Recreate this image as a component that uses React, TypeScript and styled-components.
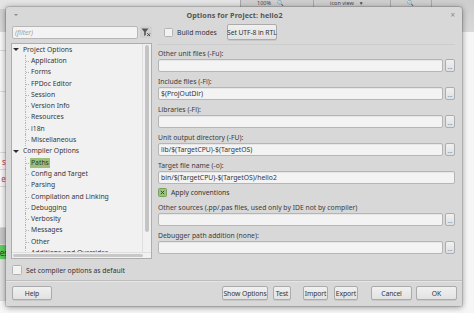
import React from 'react';
import styled, { createGlobalStyle } from 'styled-components';

const Global = createGlobalStyle`
  html, body { margin: 0; padding: 0; }
  body {
    width: 474px; height: 313px; overflow: hidden;
    font-family: "Noto Sans", "DejaVu Sans", sans-serif;
    background: #f5f5f5;
  }
`;

const Desktop = styled.div`
  position: relative;
  width: 474px;
  height: 313px;
  overflow: hidden;
  display: flex;
  flex-direction: column;
  background: #f6f6f6;
`;

const TopBar = styled.div`
  height: 32px;
  flex: none;
  display: flex;
  align-items: flex-start;
  background: linear-gradient(#cdcdcd, #d9d9d9);
  font-size: 5.5px;
  color: #444;
`;

const TopLight = styled.div`
  width: 240px;
  height: 9px;
  background: #e4e4e4;
  border-right: 1px solid #a8a8a8;
`;

const ToolItem = styled.div<{ $w: number }>`
  width: ${p => p.$w}px;
  height: 7px;
  display: flex;
  align-items: flex-start;
  gap: 6px;
  padding-left: 16px;
  border-right: 1px solid #a8a8a8;
  line-height: 6px;
  span { white-space: nowrap; }
`;

const BackRow = styled.div`
  flex: 1;
  display: flex;
`;

const LeftPane = styled.div`
  width: 8px;
  display: flex;
  flex-direction: column;
  font-size: 8px;
  background: #f7f7f7;
`;

const LeftLine = styled.div<{ $h: number; $bg?: string; $color?: string }>`
  height: ${p => p.$h}px;
  flex: none;
  background: ${p => p.$bg || 'transparent'};
  color: ${p => p.$color || '#444'};
  border-bottom: 1px solid #dadada;
  display: flex;
  align-items: center;
  justify-content: flex-end;
  overflow: hidden;
`;

const Dialog = styled.div`
  position: absolute;
  left: 6px;
  top: 7px;
  width: 456px;
  height: 299px;
  background: #d8d8d8;
  border-radius: 3px 3px 1px 1px;
  box-shadow: 0 1px 6px rgba(0, 0, 0, 0.45), 0 0 0 1px rgba(0,0,0,0.12);
  display: flex;
  flex-direction: column;
  color: #333;
  font-size: 6.8px;
`;

const TitleBar = styled.div`
  height: 15px;
  flex: none;
  display: grid;
  grid-template-columns: 1fr auto 1fr;
  align-items: center;
  padding: 0 7px 0 8px;
  color: #555;
`;

const Title = styled.div`
  font-weight: bold;
  font-size: 7.2px;
  letter-spacing: 0.1px;
`;

const MenuArrow = styled.div`
  width: 0; height: 0;
  border-left: 2.5px solid transparent;
  border-right: 2.5px solid transparent;
  border-top: 2.5px solid #888;
`;

const Close = styled.div`
  justify-self: end;
  font-size: 8px;
  color: #8a8a8a;
  line-height: 8px;
`;

const Main = styled.div`
  display: grid;
  grid-template-columns: 141px 298px;
  column-gap: 5px;
  padding: 2px 0 0 5px;
  flex: none;
`;

const LeftCol = styled.div`
  display: flex;
  flex-direction: column;
`;

const FilterRow = styled.div`
  margin-top: 2px;
  height: 13px;
  display: flex;
  gap: 2px;
  padding-left: 1px;
`;

const FilterInput = styled.div`
  width: 124px;
  height: 11px;
  background: #f3f3f3;
  border: 1px solid #b7b7b7;
  border-radius: 2px;
  font-style: italic;
  color: #a0a0a0;
  line-height: 11px;
  padding-left: 2px;
`;

const FilterBtn = styled.div`
  width: 12px;
  height: 12px;
  display: flex;
  align-items: center;
  justify-content: center;
  border-radius: 2px;
  background: #d0d0d0;
`;

const Tree = styled.div`
  margin-top: 4px;
  height: 214px;
  border: 1px solid #adadad;
  background: #f1f1f1;
  display: flex;
  flex-direction: column;
`;

const TreeViewport = styled.div`
  flex: 1;
  display: flex;
  overflow: hidden;
`;

const TreeList = styled.div`
  flex: 1;
  display: flex;
  flex-direction: column;
  overflow: hidden;
`;

const VScroll = styled.div`
  width: 6px;
  flex: none;
  border-left: 1px solid #dedede;
  padding: 1px 1px 20px 1px;
  display: flex;
  justify-content: center;
`;

const VThumb = styled.div`
  width: 4px;
  background: #c4c4c4;
  border-radius: 2px;
`;

const HScroll = styled.div`
  box-sizing: border-box;
  height: 6px;
  flex: none;
  border-top: 1px solid #dedede;
  padding: 1px 8px 1px 1px;
  display: flex;
`;

const HThumb = styled.div`
  flex: 1;
  background: #c8c8c8;
  border-radius: 2px;
`;

const Row = styled.div`
  height: 11.3px;
  flex: none;
  display: flex;
  align-items: center;
  white-space: nowrap;
  color: #363636;
`;

const Expander = styled.div`
  margin: 0 3px 0 1px;
  width: 0; height: 0;
  border-left: 3px solid transparent;
  border-right: 3px solid transparent;
  border-top: 3.5px solid #2e2e2e;
`;

const Branch = styled.div`
  position: relative;
  align-self: stretch;
  margin-left: 13px;
  width: 4px;
  border-left: 1px dotted #b4b4b4;
  &::after {
    content: '';
    position: absolute;
    left: 0; top: 50%;
    width: 3px;
    border-top: 1px dotted #b4b4b4;
  }
`;

const ItemText = styled.span<{ $sel?: boolean }>`
  padding: 1px 1px;
  background: ${p => (p.$sel ? '#9dbf7c' : 'transparent')};
  color: ${p => (p.$sel ? '#2f3a25' : 'inherit')};
  line-height: 8px;
`;

const RightCol = styled.div`
  display: flex;
  flex-direction: column;
`;

const TopRow = styled.div`
  height: 16px;
  display: flex;
  align-items: center;
  padding-left: 7px;
`;

const CheckLabel = styled.label`
  display: flex;
  align-items: center;
  gap: 4px;
  color: #333;
`;

const Box = styled.span<{ $checked?: boolean; $size?: number }>`
  width: ${p => p.$size || 7}px;
  height: ${p => p.$size || 7}px;
  flex: none;
  border: 1px solid ${p => (p.$checked ? '#7aa05c' : '#b3b3b3')};
  border-radius: 1.5px;
  background: ${p => (p.$checked ? '#9ec37f' : '#f2f2f2')};
  display: flex;
  align-items: center;
  justify-content: center;
`;

const Button = styled.div<{ $w: number; $ml?: number; $h?: number }>`
  width: ${p => p.$w}px;
  margin-left: ${p => p.$ml || 0}px;
  height: ${p => p.$h || 14}px;
  box-sizing: border-box;
  flex: none;
  display: flex;
  align-items: center;
  justify-content: center;
  background: linear-gradient(#f0f0f0, #e2e2e2);
  border: 1px solid #ababab;
  border-radius: 2px;
  box-shadow: 0 1px 0 rgba(0,0,0,0.08);
  color: #333;
  white-space: nowrap;
  letter-spacing: -0.1px;
`;

const Fields = styled.div`
  margin-top: 4px;
  padding: 4px 0 0 1px;
  border-top: 1px solid #cdcdcd;
  display: flex;
  flex-direction: column;
`;

const Label = styled.div<{ $mt?: number }>`
  height: 10px;
  line-height: 10px;
  margin-top: ${p => p.$mt ?? 5}px;
  color: #3a3a3a;
  white-space: nowrap;
  &:first-child { margin-top: 0; }
`;

const InputRow = styled.div`
  height: 13px;
  display: flex;
  gap: 2px;
`;

const Input = styled.div`
  flex: 1;
  box-sizing: border-box;
  height: 13px;
  background: #f3f3f3;
  border: 1px solid #b5b5b5;
  border-radius: 2px;
  box-shadow: inset 0 1px 0 rgba(0,0,0,0.05);
  padding-left: 2px;
  line-height: 11px;
  color: #333;
  white-space: nowrap;
  overflow: hidden;
`;

const Browse = styled.div`
  width: 10px;
  box-sizing: border-box;
  height: 13px;
  flex: none;
  background: linear-gradient(#f0f0f0, #e0e0e0);
  border: 1px solid #adadad;
  border-radius: 2px;
  display: flex;
  align-items: flex-end;
  justify-content: center;
  font-size: 6px;
  line-height: 8px;
  color: #555;
`;

const ConvRow = styled.div`
  margin-top: 3px;
  height: 10px;
  display: flex;
  align-items: center;
`;

const DefaultRow = styled.div`
  margin: 6px 0 0 6px;
  height: 10px;
  display: flex;
  align-items: center;
`;

const Separator = styled.div`
  margin-top: 5px;
  height: 0;
  border-top: 1px solid #bdbdbd;
  border-bottom: 1px solid #e6e6e6;
`;

const ButtonRow = styled.div`
  margin-top: 4px;
  display: flex;
  padding: 0 5px 0 6px;
`;

const Spacer = styled.div`
  flex: 1;
`;

const tree: { label: string; top?: boolean; sel?: boolean }[] = [
  { label: 'Project Options', top: true },
  { label: 'Application' },
  { label: 'Forms' },
  { label: 'FPDoc Editor' },
  { label: 'Session' },
  { label: 'Version Info' },
  { label: 'Resources' },
  { label: 'i18n' },
  { label: 'Miscellaneous' },
  { label: 'Compiler Options', top: true },
  { label: 'Paths', sel: true },
  { label: 'Config and Target' },
  { label: 'Parsing' },
  { label: 'Compilation and Linking' },
  { label: 'Debugging' },
  { label: 'Verbosity' },
  { label: 'Messages' },
  { label: 'Other' },
  { label: 'Additions and Overrides' },
];

const Field: React.FC<{ label: string; value?: string; browse?: boolean; mt?: number }> = ({ label, value, browse = true, mt }) => (
  <>
    <Label $mt={mt}>{label}</Label>
    <InputRow>
      <Input>{value}</Input>
      {browse && <Browse>...</Browse>}
    </InputRow>
  </>
);

const FilterIcon = () => (
  <svg width="10" height="9" viewBox="0 0 10 9">
    <path d="M0.5 0.5 H7.5 L4.8 3.8 V7 L3.2 8 V3.8 Z" fill="#555" />
    <path d="M6.3 5.3 L9 8 M9 5.3 L6.3 8" stroke="#444" strokeWidth="1" />
  </svg>
);

const Tick = () => (
  <svg width="5" height="5" viewBox="0 0 5 5">
    <path d="M0.8 0.8 L4.2 4.2 M4.2 0.8 L0.8 4.2" stroke="#2f4d1e" strokeWidth="1" />
  </svg>
);

export default function App() {
  return (
    <>
      <Global />
      <Desktop>
        <TopBar>
          <TopLight />
          <ToolItem $w={56}><span>100%</span><span>🔍</span></ToolItem>
          <ToolItem $w={60}><span>icon view</span><span>▾</span></ToolItem>
          <ToolItem $w={24}><span>🔍</span></ToolItem>
        </TopBar>
        <BackRow>
          <LeftPane>
            <LeftLine $h={18} />
            <LeftLine $h={40} />
            <LeftLine $h={60} />
            <LeftLine $h={16} $color="#d04040">s:</LeftLine>
            <LeftLine $h={16} $color="#d04040">e:</LeftLine>
            <LeftLine $h={40} />
            <LeftLine $h={16} $bg="#c8c8c8" />
            <LeftLine $h={14} $bg="#5fcf5f" $color="#1c4a1c">es</LeftLine>
            <LeftLine $h={40} $bg="#e0e0e0" />
          </LeftPane>
        </BackRow>

        <Dialog>
          <TitleBar>
            <MenuArrow />
            <Title>Options for Project: hello2</Title>
            <Close>×</Close>
          </TitleBar>

          <Main>
            <LeftCol>
              <FilterRow>
                <FilterInput>(filter)</FilterInput>
                <FilterBtn><FilterIcon /></FilterBtn>
              </FilterRow>
              <Tree>
                <TreeViewport>
                  <TreeList>
                    {tree.map(item => (
                      <Row key={item.label}>
                        {item.top ? <Expander /> : <Branch />}
                        <ItemText $sel={item.sel}>{item.label}</ItemText>
                      </Row>
                    ))}
                  </TreeList>
                  <VScroll><VThumb /></VScroll>
                </TreeViewport>
                <HScroll><HThumb /></HScroll>
              </Tree>
            </LeftCol>

            <RightCol>
              <TopRow>
                <CheckLabel><Box />Build modes</CheckLabel>
                <Button $w={50} $h={16} $ml={10}>Set UTF-8 in RTL</Button>
              </TopRow>
              <Fields>
                <Field label="Other unit files (-Fu):" />
                <Field label="Include files (-Fi):" value="$(ProjOutDir)" />
                <Field label="Libraries (-Fl):" />
                <Field label="Unit output directory (-FU):" value="lib/$(TargetCPU)-$(TargetOS)" />
                <Field label="Target file name (-o):" value="bin/$(TargetCPU)-$(TargetOS)/hello2" browse={false} />
                <ConvRow>
                  <CheckLabel><Box $checked><Tick /></Box>Apply conventions</CheckLabel>
                </ConvRow>
                <Field label="Other sources (.pp/.pas files, used only by IDE not by compiler)" mt={6} />
                <Field label="Debugger path addition (none):" />
              </Fields>
            </RightCol>
          </Main>

          <DefaultRow>
            <CheckLabel><Box $size={8} />Set compiler options as default</CheckLabel>
          </DefaultRow>
          <Separator />
          <ButtonRow>
            <Button $w={40}>Help</Button>
            <Spacer />
            <Button $w={46}>Show Options</Button>
            <Button $w={18} $ml={5}>Test</Button>
            <Button $w={25} $ml={12}>Import</Button>
            <Button $w={24} $ml={6}>Export</Button>
            <Button $w={41} $ml={13}>Cancel</Button>
            <Button $w={41} $ml={4}>OK</Button>
          </ButtonRow>
        </Dialog>
      </Desktop>
    </>
  );
}
